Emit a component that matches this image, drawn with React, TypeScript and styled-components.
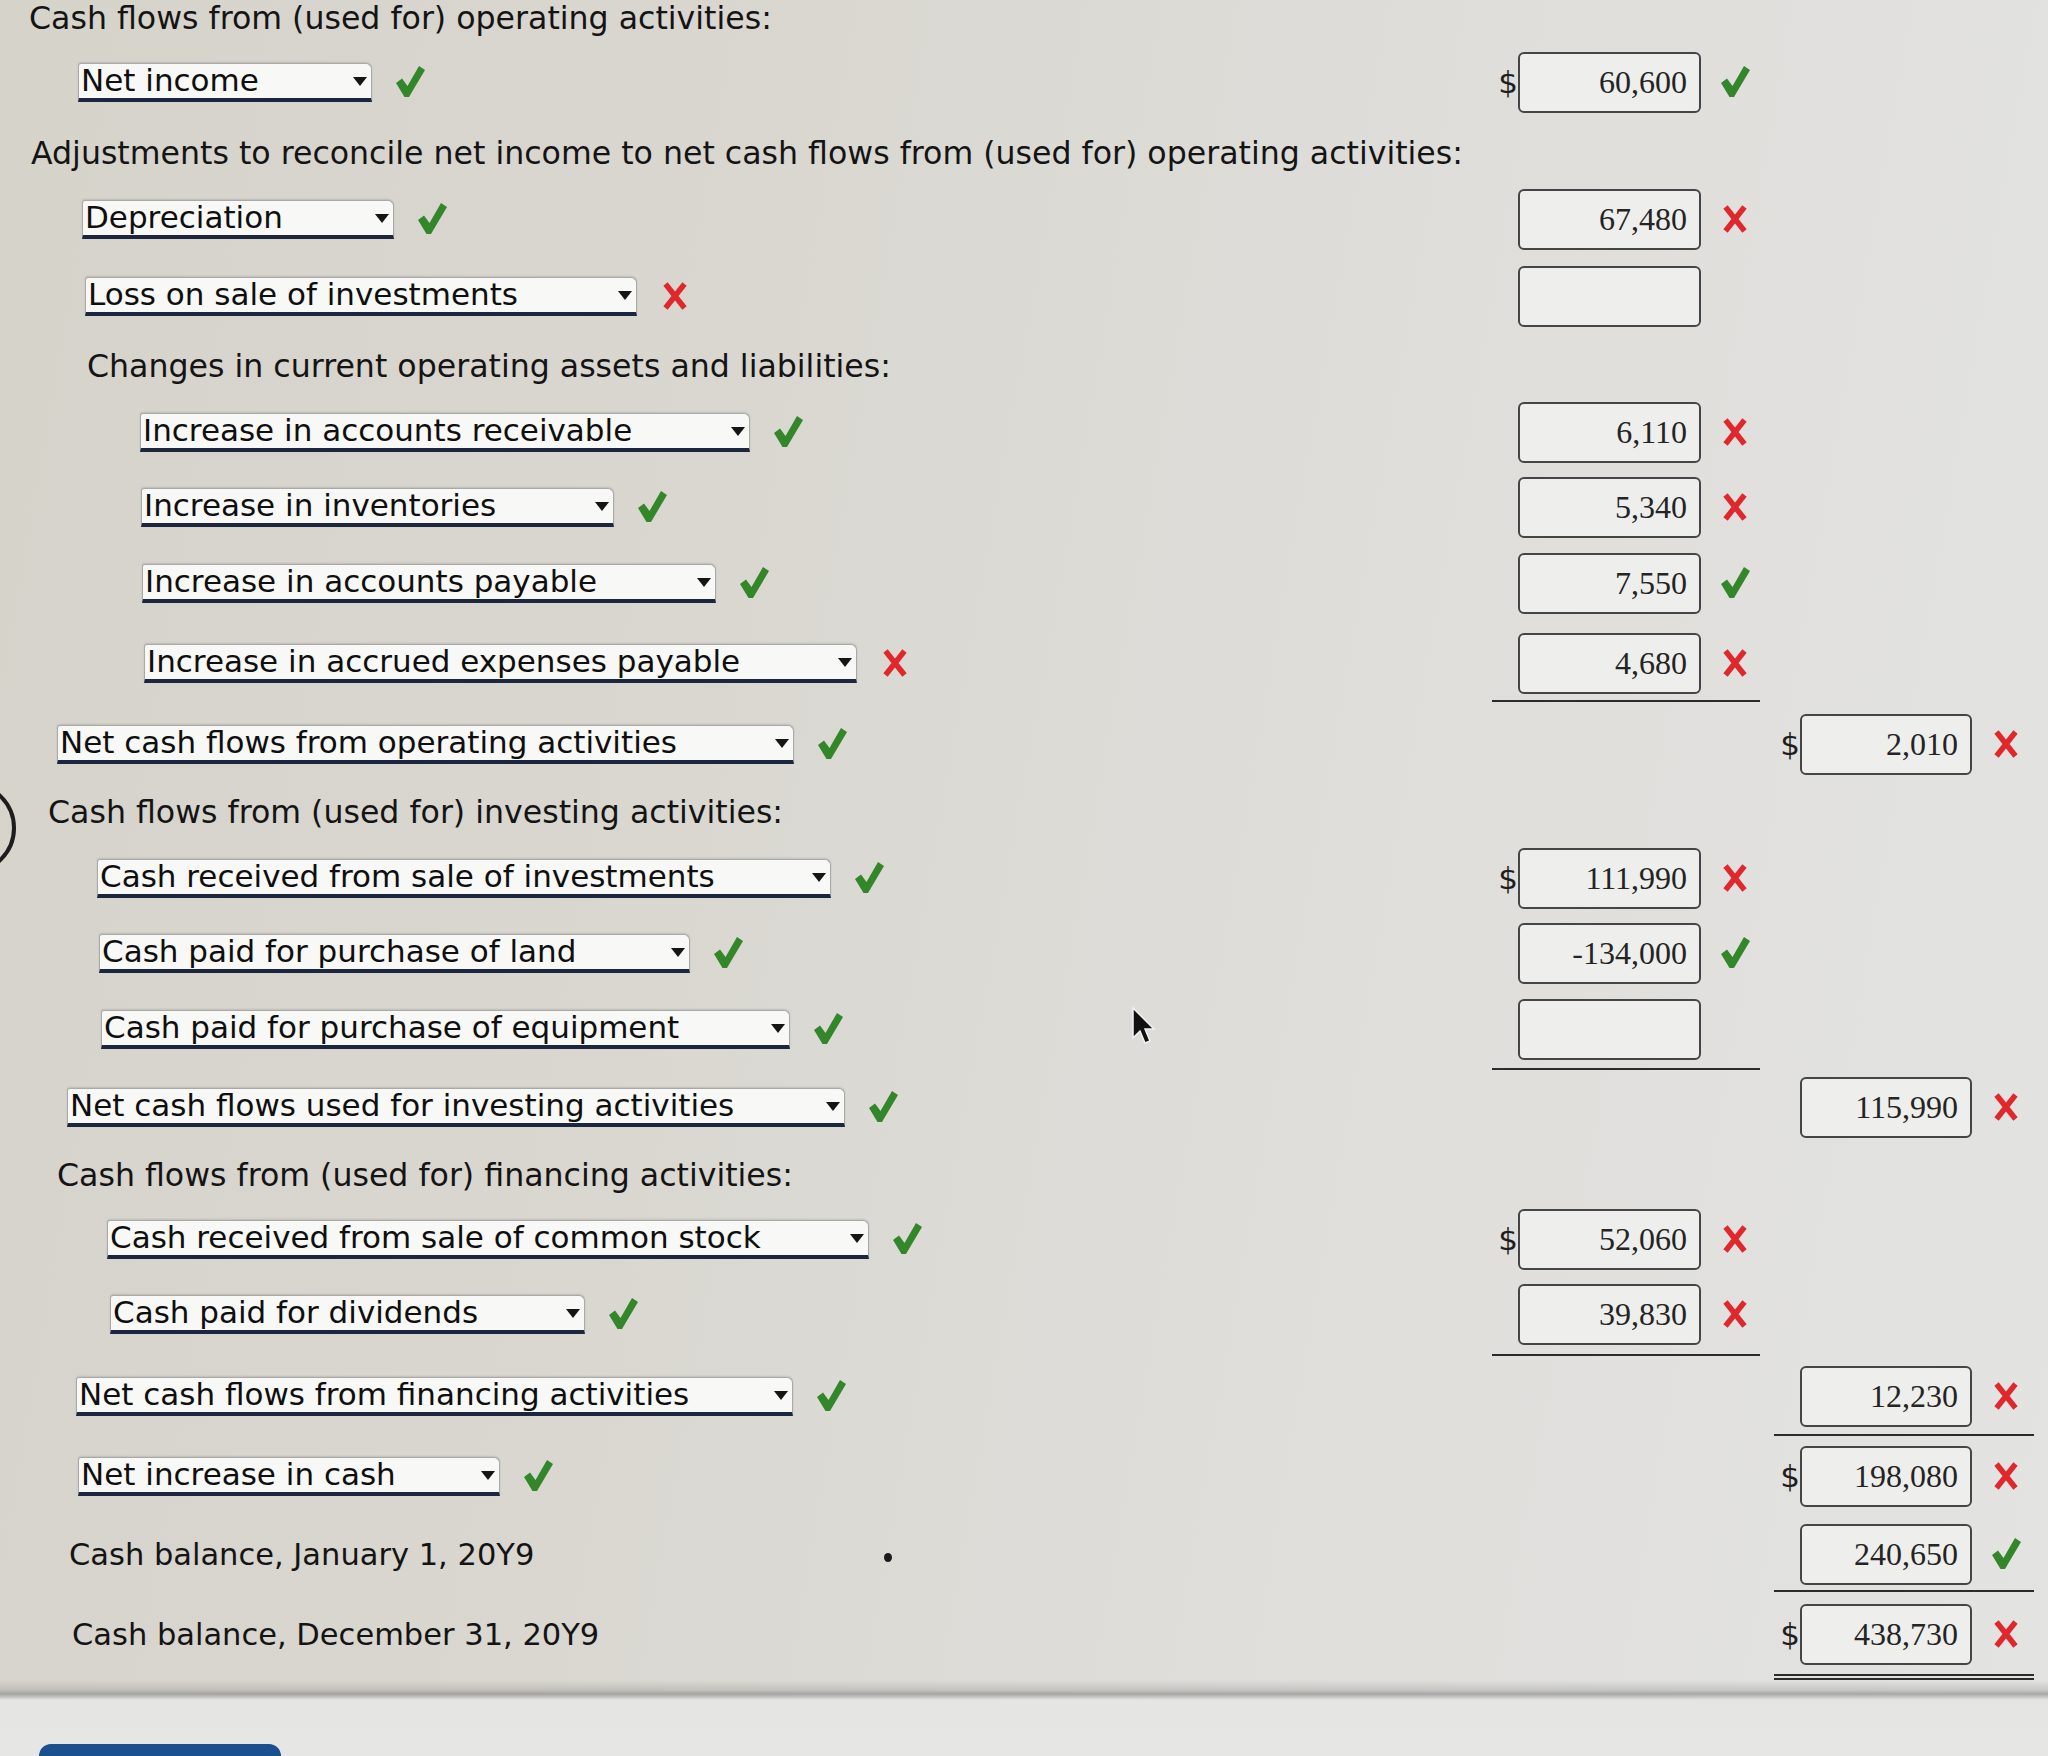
import React from "react";
import styled, { createGlobalStyle } from "styled-components";

type Mark = "ok" | "bad";

type Amount = {
  value: string;
  dollar?: boolean;
  mark?: Mark;
  rule?: "single" | "double";
};

type Row = {
  kind: "heading" | "select" | "text";
  h: number;
  x: number;
  w?: number;
  lift?: number;
  label: string;
  mark?: Mark;
  ring?: boolean;
  c1?: Amount;
  c2?: Amount;
};

const ROWS: Row[] = [
  { kind: "heading", h: 44, lift: 12, x: 29, label: "Cash flows from (used for) operating activities:" },
  { kind: "select", h: 76, x: 78, w: 294, label: "Net income", mark: "ok", c1: { value: "60,600", dollar: true, mark: "ok" } },
  {
    kind: "heading",
    h: 66,
    x: 31,
    label: "Adjustments to reconcile net income to net cash flows from (used for) operating activities:",
  },
  { kind: "select", h: 66, x: 82, w: 312, label: "Depreciation", mark: "ok", c1: { value: "67,480", mark: "bad" } },
  { kind: "select", h: 88, x: 85, w: 552, label: "Loss on sale of investments", mark: "bad", c1: { value: "" } },
  { kind: "heading", h: 52, x: 87, label: "Changes in current operating assets and liabilities:" },
  { kind: "select", h: 80, x: 140, w: 610, label: "Increase in accounts receivable", mark: "ok", c1: { value: "6,110", mark: "bad" } },
  { kind: "select", h: 70, x: 141, w: 473, label: "Increase in inventories", mark: "ok", c1: { value: "5,340", mark: "bad" } },
  { kind: "select", h: 82, x: 142, w: 574, label: "Increase in accounts payable", mark: "ok", c1: { value: "7,550", mark: "ok" } },
  {
    kind: "select",
    h: 78,
    x: 144,
    w: 713,
    label: "Increase in accrued expenses payable",
    mark: "bad",
    c1: { value: "4,680", mark: "bad", rule: "single" },
  },
  {
    kind: "select",
    h: 84,
    x: 57,
    w: 737,
    label: "Net cash flows from operating activities",
    mark: "ok",
    c2: { value: "2,010", dollar: true, mark: "bad" },
  },
  { kind: "heading", h: 52, x: 48, label: "Cash flows from (used for) investing activities:", ring: true },
  {
    kind: "select",
    h: 80,
    x: 97,
    w: 734,
    label: "Cash received from sale of investments",
    mark: "ok",
    c1: { value: "111,990", dollar: true, mark: "bad" },
  },
  { kind: "select", h: 70, x: 99, w: 591, label: "Cash paid for purchase of land", mark: "ok", c1: { value: "-134,000", mark: "ok" } },
  {
    kind: "select",
    h: 82,
    x: 101,
    w: 689,
    label: "Cash paid for purchase of equipment",
    mark: "ok",
    c1: { value: "", rule: "single" },
  },
  {
    kind: "select",
    h: 74,
    x: 67,
    w: 778,
    label: "Net cash flows used for investing activities",
    mark: "ok",
    c2: { value: "115,990", mark: "bad" },
  },
  { kind: "heading", h: 62, x: 57, label: "Cash flows from (used for) financing activities:" },
  {
    kind: "select",
    h: 66,
    x: 107,
    w: 762,
    label: "Cash received from sale of common stock",
    mark: "ok",
    c1: { value: "52,060", dollar: true, mark: "bad" },
  },
  {
    kind: "select",
    h: 84,
    x: 110,
    w: 475,
    label: "Cash paid for dividends",
    mark: "ok",
    c1: { value: "39,830", mark: "bad", rule: "single" },
  },
  {
    kind: "select",
    h: 80,
    x: 76,
    w: 717,
    label: "Net cash flows from financing activities",
    mark: "ok",
    c2: { value: "12,230", mark: "bad", rule: "single" },
  },
  {
    kind: "select",
    h: 80,
    x: 78,
    w: 422,
    label: "Net increase in cash",
    mark: "ok",
    c2: { value: "198,080", dollar: true, mark: "bad" },
  },
  { kind: "text", h: 76, x: 69, label: "Cash balance, January 1, 20Y9", c2: { value: "240,650", mark: "ok", rule: "single" } },
  {
    kind: "text",
    h: 84,
    x: 72,
    label: "Cash balance, December 31, 20Y9",
    c2: { value: "438,730", dollar: true, mark: "bad", rule: "double" },
  },
];

const GlobalStyle = createGlobalStyle`
  html, body {
    margin: 0;
    padding: 0;
  }
  body {
    background: #dcdad4;
    font-family: "DejaVu Sans", Verdana, sans-serif;
    color: #161616;
  }
`;

const Page = styled.div`
  position: relative;
  width: 2048px;
  height: 1756px;
  overflow: hidden;
  background: linear-gradient(100deg, #d6d3cb 0%, #d9d7d0 35%, #dfdedb 65%, #e3e3e1 100%);
`;

const Sheet = styled.div`
  display: flex;
  flex-direction: column;
`;

const Line = styled.div<{ $h: number }>`
  display: grid;
  grid-template-columns: 1492px 282px 1fr;
  height: ${({ $h }) => $h}px;
`;

const Left = styled.div<{ $x: number; $lift: number }>`
  position: relative;
  display: flex;
  align-items: center;
  gap: 4px;
  padding-left: ${({ $x }) => $x}px;
  padding-bottom: ${({ $lift }) => $lift}px;
`;

const Heading = styled.span<{ $plain?: boolean }>`
  font-size: ${({ $plain }) => ($plain ? 30.5 : 31.6)}px;
  white-space: nowrap;
  color: #141414;
`;

const Select = styled.div<{ $w: number }>`
  position: relative;
  box-sizing: border-box;
  width: ${({ $w }) => $w}px;
  height: 39px;
  padding: 0 30px 0 2px;
  display: flex;
  align-items: center;
  background: #f8f8f7;
  border: 1px solid #a9a9a9;
  border-bottom: 4px solid #1c263e;
  border-radius: 3px 6px 0 0;
  box-shadow: 0 -1px 2px rgba(0, 0, 0, 0.12);
  font-size: 31px;
  line-height: 1;
  white-space: nowrap;
  color: #0f0f0f;

  &::after {
    content: "";
    position: absolute;
    right: 4px;
    top: 13px;
    border-left: 7px solid transparent;
    border-right: 7px solid transparent;
    border-top: 9px solid #151515;
  }
`;

const AmountCell = styled.div<{ $rule?: "single" | "double"; $ruleW: number }>`
  position: relative;
  display: flex;
  align-items: center;

  &::after {
    content: "";
    position: absolute;
    left: 0;
    bottom: ${({ $rule }) => ($rule === "double" ? -4 : 0)}px;
    width: ${({ $ruleW }) => $ruleW}px;
    display: ${({ $rule }) => ($rule ? "block" : "none")};
    border-bottom: ${({ $rule }) => ($rule === "double" ? "6px double #2b2b2b" : "2px solid #2b2b2b")};
  }
`;

const Dollar = styled.span`
  width: 26px;
  box-sizing: border-box;
  text-align: right;
  font-size: 31px;
  color: #1e1e1e;
`;

const Box = styled.div<{ $w: number }>`
  box-sizing: border-box;
  width: ${({ $w }) => $w}px;
  height: 61px;
  padding-right: 12px;
  display: flex;
  align-items: center;
  justify-content: flex-end;
  background: #eeeeec;
  border: 2px solid #454545;
  border-radius: 6px;
  font-family: "Liberation Serif", "Times New Roman", serif;
  font-size: 32px;
  color: #242424;
`;

const MarkSlot = styled.span`
  display: inline-flex;
  align-items: center;
  justify-content: center;
  width: 32px;
  margin-left: 18px;
`;

const Ring = styled.div`
  position: absolute;
  left: -76px;
  top: -4px;
  width: 84px;
  height: 84px;
  border: 4px solid #1d1d1d;
  border-radius: 50%;
`;

const Footer = styled.div`
  margin-top: 4px;
  height: 120px;
  padding-top: 64px;
  padding-left: 39px;
  box-sizing: border-box;
  background: linear-gradient(
    180deg,
    rgba(0, 0, 0, 0) 0px,
    rgba(150, 150, 148, 0.35) 10px,
    rgba(120, 120, 118, 0.55) 14px,
    #e5e5e3 20px,
    #e7e7e5 100%
  );
`;

const BlueButton = styled.div`
  width: 242px;
  height: 40px;
  border-radius: 12px 12px 0 0;
  background: #1c4f8e;
`;

const Cursor = styled.svg`
  position: absolute;
  left: 1131px;
  top: 1006px;
`;

const Speck = styled.span`
  position: absolute;
  left: 884px;
  top: 1553px;
  width: 8px;
  height: 9px;
  border-radius: 50%;
  background: #1b1b1b;
`;

const Check = () => (
  <svg width="30" height="34" viewBox="0 0 30 34">
    <path d="M1 18 L7 13.5 L12.5 21 L24 1 L30 5 L14 32 L9.5 32 Z" fill="#33862a" />
  </svg>
);

const Cross = () => (
  <svg width="26" height="30" viewBox="0 0 26 30">
    <path d="M3.5 3 L22.5 27 M22.5 3 L3.5 27" stroke="#e0272c" strokeWidth="5.5" strokeLinecap="butt" fill="none" />
  </svg>
);

const MarkIcon = ({ mark }: { mark?: Mark }) =>
  mark ? <MarkSlot>{mark === "ok" ? <Check /> : <Cross />}</MarkSlot> : null;

const AmountView = ({ amount, boxW, ruleW }: { amount?: Amount; boxW: number; ruleW: number }) => {
  if (!amount) {
    return <AmountCell $ruleW={ruleW} />;
  }
  return (
    <AmountCell $rule={amount.rule} $ruleW={ruleW}>
      <Dollar>{amount.dollar ? "$" : ""}</Dollar>
      <Box $w={boxW}>{amount.value}</Box>
      <MarkIcon mark={amount.mark} />
    </AmountCell>
  );
};

const App = () => {
  return (
    <>
      <GlobalStyle />
      <Page>
        <Sheet>
          {ROWS.map((row) => (
            <Line key={row.label} $h={row.h}>
              <Left $x={row.x} $lift={row.lift ?? 0}>
                {row.ring ? <Ring /> : null}
                {row.kind === "select" ? (
                  <>
                    <Select $w={row.w ?? 300}>{row.label}</Select>
                    <MarkIcon mark={row.mark} />
                  </>
                ) : (
                  <Heading $plain={row.kind === "text"}>{row.label}</Heading>
                )}
              </Left>
              <AmountView amount={row.c1} boxW={183} ruleW={268} />
              <AmountView amount={row.c2} boxW={172} ruleW={260} />
            </Line>
          ))}
        </Sheet>
        <Footer>
          <BlueButton />
        </Footer>
        <Cursor width="26" height="40" viewBox="0 0 26 40">
          <path d="M2 2 L2 32 L9 25 L14 37 L19 35 L14 23 L23 23 Z" fill="#111" stroke="#f2f2f2" strokeWidth="1.5" />
        </Cursor>
        <Speck />
      </Page>
    </>
  );
};

export default App;
